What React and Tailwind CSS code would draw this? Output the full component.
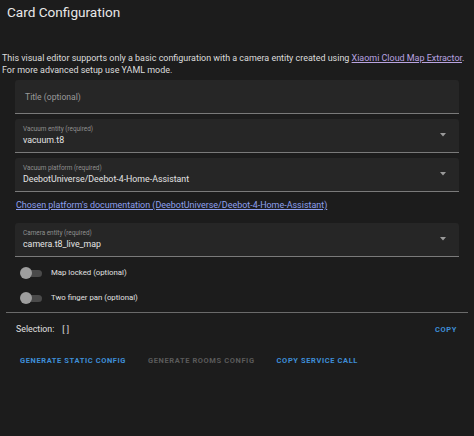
import React from "react";

function Field({ label, value, placeholder, select }) {
  return (
    <div className="relative mx-[15px] h-[34px] rounded-t-[3px] bg-[#262626] border-b border-[#7a7a7a]">
      {placeholder ? (
        <div className="pl-[10px] pt-[11px] text-[8.6px] text-[#9a9a9a]">{placeholder}</div>
      ) : (
        <div className="pl-[8px] pt-[6px]">
          <div className="text-[6.4px] leading-[9px] text-[#8f8f8f]">{label}</div>
          <div className="text-[8.8px] leading-[13px] text-[#e4e4e4]">{value}</div>
        </div>
      )}
      {select && (
        <svg className="absolute right-[13px] top-[14px]" width="6" height="4" viewBox="0 0 6 4">
          <path d="M0 0 L6 0 L3 3.5 Z" fill="#9a9a9a" />
        </svg>
      )}
    </div>
  );
}

function Toggle({ label }) {
  return (
    <div className="flex items-center h-[25px] pl-[20px]">
      <div className="relative w-[22px] h-[12px]">
        <div className="absolute left-[3px] top-[3px] w-[19px] h-[7px] rounded-full bg-[#4a4a4a]" />
        <div className="absolute left-0 top-0 w-[12px] h-[12px] rounded-full bg-[#9e9e9e]" />
      </div>
      <span className="ml-[9px] text-[7.8px] text-[#e0e0e0]">{label}</span>
    </div>
  );
}

export default function App() {
  return (
    <div
      className="w-[474px] h-[436px] bg-[#1c1c1c] text-[#e1e1e1] overflow-hidden"
      style={{ fontFamily: "Roboto, 'Liberation Sans', sans-serif" }}
    >
      <h1 className="pl-[7px] pt-[2px] text-[13.6px] leading-[20px] text-[#e8e8e8]">Card Configuration</h1>

      <p className="mt-[30px] pl-[2px] text-[8.95px] leading-[12px] text-[#dcdcdc] whitespace-nowrap">
        This visual editor supports only a basic configuration with a camera entity created using{" "}
        <a className="underline text-[#b9a3e0]" href="#">Xiaomi Cloud Map Extractor</a>.
        <br />
        For more advanced setup use YAML mode.
      </p>

      <div className="mt-[4px] flex flex-col gap-[5px]">
        <Field placeholder="Title (optional)" />
        <Field label="Vacuum entity (required)" value="vacuum.t8" select />
        <Field label="Vacuum platform (required)" value="DeebotUniverse/Deebot-4-Home-Assistant" select />
      </div>

      <div className="mt-[7px] pl-[16px] text-[8.95px] leading-[12px]">
        <a className="underline text-[#8ea0ee]" href="#">
          Chosen platform's documentation (DeebotUniverse/Deebot-4-Home-Assistant)
        </a>
      </div>

      <div className="mt-[12px]">
        <Field label="Camera entity (required)" value="camera.t8_live_map" select />
      </div>

      <div className="mt-[3px]">
        <Toggle label="Map locked (optional)" />
        <Toggle label="Two finger pan (optional)" />
      </div>

      <div className="mx-[6px] mt-[2px] border-t border-[#6a6a6a]" />

      <div className="flex items-center justify-between pl-[16px] pr-[17px] mt-[10px]">
        <div className="text-[8.8px] text-[#e0e0e0]">
          Selection:<span className="ml-[8px]">[ ]</span>
        </div>
        <button className="text-[7.5px] font-bold tracking-[0.08em] text-[#3e8ed8]">COPY</button>
      </div>

      <div className="flex items-center pl-[20px] mt-[19px] text-[7.5px] font-bold tracking-[0.08em]">
        <span className="text-[#3e8ed8]">GENERATE STATIC CONFIG</span>
        <span className="ml-[22px] text-[#5a5a5a]">GENERATE ROOMS CONFIG</span>
        <span className="ml-[22px] text-[#3e8ed8]">COPY SERVICE CALL</span>
      </div>
    </div>
  );
}
